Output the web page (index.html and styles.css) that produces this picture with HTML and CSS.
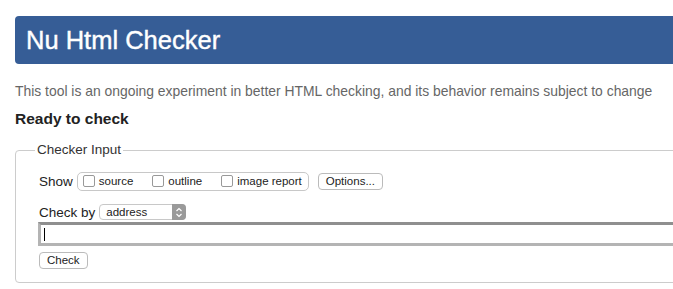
FILE: index.html
```html
<!DOCTYPE html>
<html>
<head>
    <meta charset="UTF-8">
    <title>Nu Html Checker</title>
    <link rel="stylesheet" href="styles.css">
</head>
<body>
    <h1 class="title">Nu Html Checker</h1>
    <p class="intro">This tool is an ongoing experiment in better HTML checking, and its behavior remains subject to change</p>
    <h2 class="status">Ready to check</h2>

    <fieldset class="checker">
        <legend>Checker Input</legend>
        <div class="row">
            <span class="label">Show</span>
            <span class="show-group">
                <label class="opt"><span class="box"></span>source</label>
                <label class="opt"><span class="box"></span>outline</label>
                <label class="opt"><span class="box"></span>image report</label>
            </span>
            <span class="btn">Options...</span>
        </div>
        <div class="row by-row">
            <span class="label">Check by</span>
            <span class="select">address<span class="arrows">
                <svg width="8" height="11" viewBox="0 0 8 11"><path d="M1.5 4 L4 1.5 L6.5 4 M1.5 7 L4 9.5 L6.5 7" fill="none" stroke="#fff" stroke-width="1.2"/></svg>
            </span></span>
        </div>
        <div class="url"><span class="caret"></span></div>
        <div class="row check-row"><span class="btn">Check</span></div>
    </fieldset>
</body>
</html>
```

FILE: styles.css
```css
body {
    margin: 0;
    padding: 16px 0 0 15px;
    font-family: "Liberation Sans", Arial, sans-serif;
    overflow: hidden;
    width: 673px;
    height: 289px;
    box-sizing: border-box;
}
.title {
    margin: 0 -20px 0 0;
    background: #365d96;
    color: #fff;
    font-size: 25.5px;
    font-weight: normal;
    -webkit-text-stroke: 0.4px #fff;
    height: 48px;
    line-height: 48px;
    padding-left: 11px;
    border-radius: 4px 0 0 4px;
}
.intro {
    margin: 19px 0 0;
    color: #666;
    font-size: 13.9px;
    line-height: 16px;
    white-space: nowrap;
}
.status {
    margin: 11px 0 0;
    font-size: 15.5px;
    line-height: 18px;
    color: #222;
}
.checker {
    margin: 14px -20px 0 0;
    border: 1px solid #ccc;
    border-radius: 4px 0 0 4px;
    padding: 13px 0 13px 23px;
    font-size: 13.5px;
    color: #222;
}
.checker legend {
    padding: 0 2px;
    margin-left: -4px;
    font-size: 13.5px;
    line-height: 16px;
    color: #333;
}
.row {
    display: flex;
    align-items: center;
    height: 20px;
}
.label { margin-right: 4px; }
.show-group {
    display: flex;
    align-items: center;
    border: 1px solid #c8c8c8;
    border-radius: 5px;
    height: 17px;
    padding: 0 6px 0 5px;
    font-size: 11.5px;
    gap: 19px;
}
.opt { display: flex; align-items: center; }
.box {
    width: 10px;
    height: 10px;
    border: 1px solid #999;
    border-radius: 2px;
    margin-right: 4px;
    background: #fff;
}
.btn {
    display: inline-block;
    border: 1px solid #bbb;
    border-radius: 4px;
    font-size: 11.5px;
    height: 15px;
    line-height: 15px;
    padding: 0 7px;
    background: #fff;
    margin-left: 9px;
}
.by-row { margin-top: 11px; }
.select {
    display: flex;
    align-items: center;
    border: 1px solid #c8c8c8;
    border-radius: 4px;
    height: 14px;
    font-size: 11.5px;
    padding-left: 6px;
    position: relative;
    width: 79px;
}
.arrows {
    position: absolute;
    right: -1px;
    top: -1px;
    width: 14px;
    height: 16px;
    background: #9a9a9a;
    border-radius: 0 4px 4px 0;
    display: flex;
    align-items: center;
    justify-content: center;
}
.url {
    margin: 0 0 0 -1px;
    height: 18px;
    border: 3px solid #b4b4b4;
    border-top-color: #8f8f8f;
    border-right: none;
    background: #fff;
    display: flex;
    align-items: center;
    padding-left: 3px;
}
.caret {
    width: 1px;
    height: 13px;
    background: #000;
}
.check-row {
    margin-top: 5px;
    height: 18px;
}
.check-row .btn { margin-left: 0; }
```
